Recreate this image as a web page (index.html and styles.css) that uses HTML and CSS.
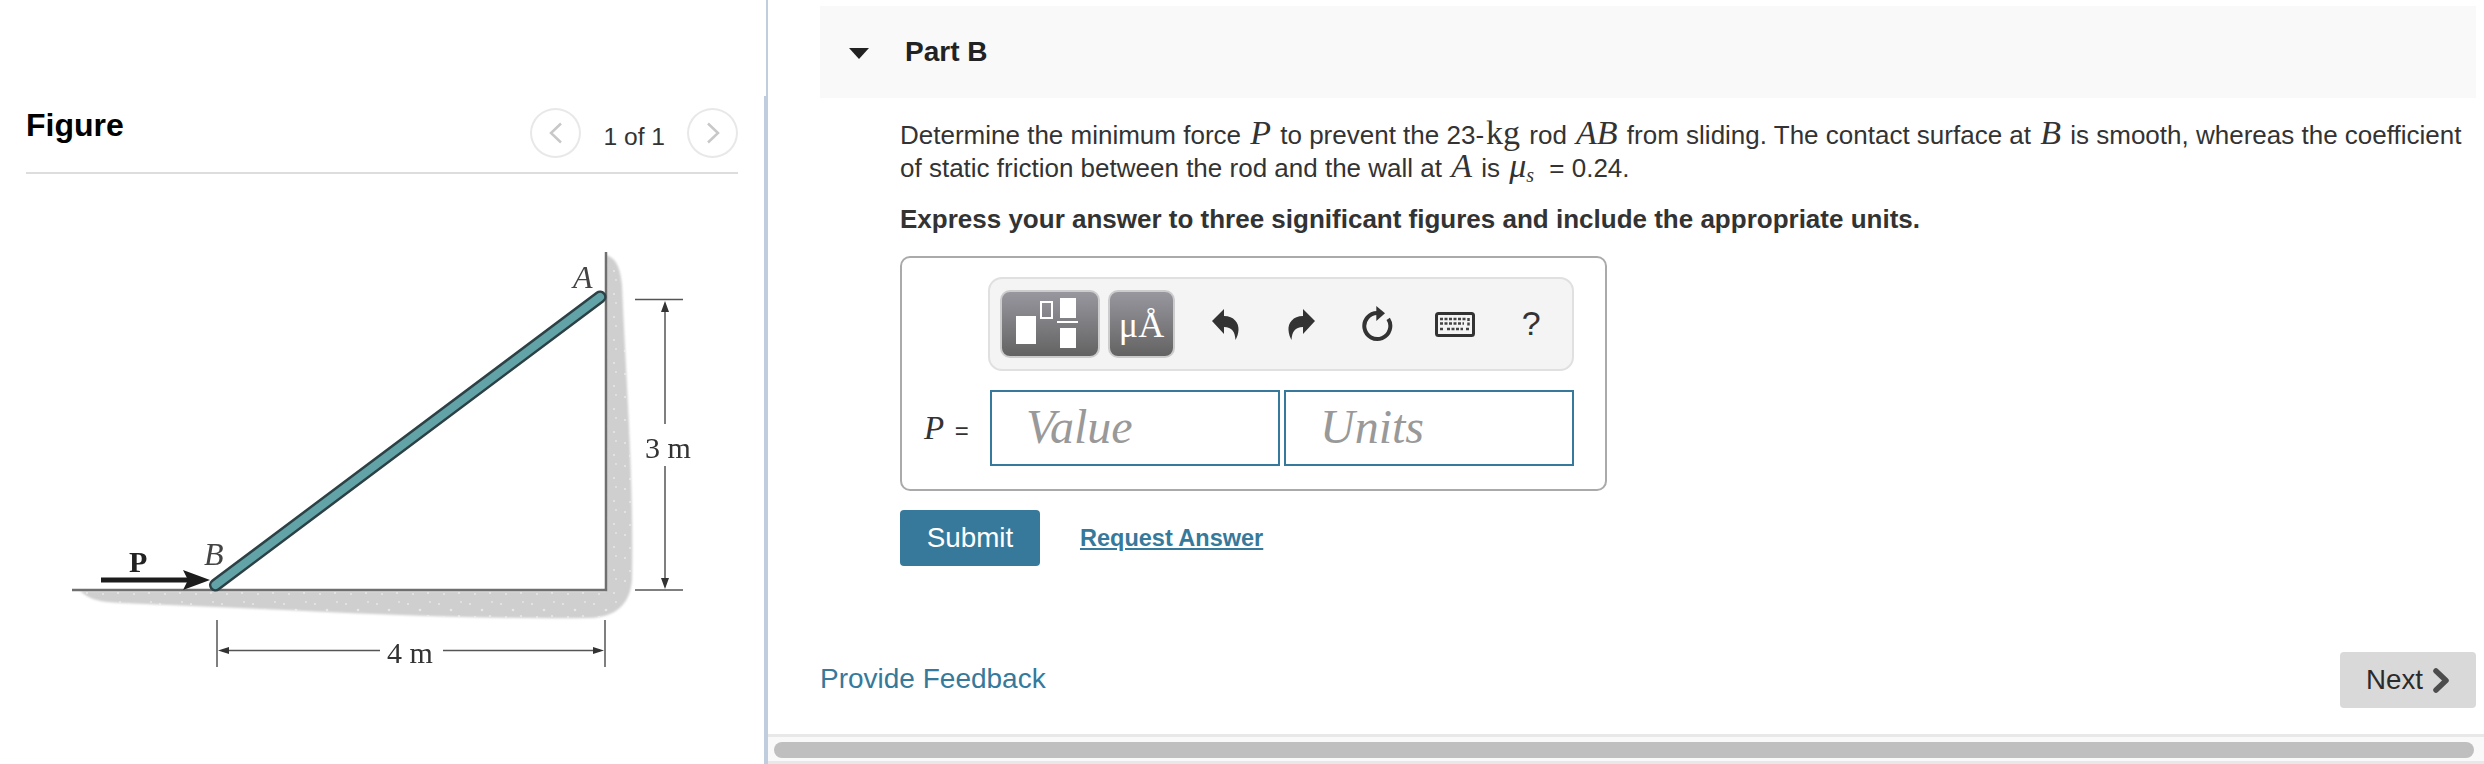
FILE: index.html
```html
<!DOCTYPE html>
<html lang="en">
<head>
<meta charset="utf-8">
<title>Part B</title>
<link rel="stylesheet" href="styles.css">
</head>
<body>
<div class="page">
  <aside class="figure-panel">
    <div class="figure-head">
      <h2 class="figure-title">Figure</h2>
      <div class="pager">
        <span class="pager-btn"><svg width="16" height="22" viewBox="0 0 16 22"><path class="chev" d="M13 1.5 3 11l10 9.5"/></svg></span>
        <span class="pager-text">1 of 1</span>
        <span class="pager-btn"><svg width="16" height="22" viewBox="0 0 16 22"><path class="chev" d="M3 1.5 13 11 3 20.5"/></svg></span>
      </div>
    </div>
    <svg class="diagram" width="712" height="500" viewBox="26 200 712 500">
      <defs>
        <pattern id="speck" width="31" height="23" patternUnits="userSpaceOnUse">
          <circle cx="5" cy="6" r="1.100" fill="#fff"/>
          <circle cx="17" cy="12" r="1.300" fill="#fff"/>
          <circle cx="27" cy="4" r=".9" fill="#fff"/>
          <circle cx="10" cy="19" r="1" fill="#fff"/>
          <circle cx="25" cy="18" r="1.100" fill="#fff"/>
        </pattern>
      </defs>
      <path class="wall" d="M80 591H606V255C615 258 620 265 622 285 626 380 634 480 632 580 630 605 615 617 590 618 450 620 300 610 120 603 100 602 90 600 80 591Z"/>
      <path class="wall-speck" d="M80 591H606V255C615 258 620 265 622 285 626 380 634 480 632 580 630 605 615 617 590 618 450 620 300 610 120 603 100 602 90 600 80 591Z"/>
      <path class="surface" d="M72 590H606V252"/>
      <line class="rod-edge" x1="215.5" y1="585" x2="600" y2="297"/>
      <line class="rod-core" x1="215.5" y1="585" x2="600" y2="297"/>
      <line class="force" x1="101" y1="580" x2="188" y2="580"/>
      <path class="force-head" d="M183 570 210 580 183 590 188 580Z"/>
      <path class="dim" d="M635 299.5H683M635 590H683M665 305V424M665 466V585M217 620V667M605 620V667M222 650.500H380M443 650.500H600"/>
      <path class="dim-head" d="M665 301 661 312H669ZM665 589 661 578H669ZM218 650.500 229 647V654ZM604 650.500 593 647V654Z"/>
      <text class="lbl-i" x="573" y="288">A</text>
      <text class="lbl-i" x="204" y="565">B</text>
      <text class="lbl-b" x="129" y="572">P</text>
      <text class="lbl" x="645" y="458">3 m</text>
      <text class="lbl" x="387" y="663">4 m</text>
    </svg>
  </aside>

  <div class="divider"><div class="divider-top"></div><div class="divider-main"></div></div>

  <main class="main-panel">
    <div class="content">
      <header class="part-head">
        <span class="caret"></span>
        <h2 class="part-title">Part B</h2>
      </header>
      <section class="question">
        <p class="prompt">Determine the minimum force <i class="m">P</i> to prevent the 23-<span class="mr">kg</span> rod <i class="m">AB</i> from sliding. The contact surface at <i class="m">B</i> is smooth, whereas the coefficient<br>of static friction between the rod and the wall at <i class="m">A</i> is <i class="m mu">μ<sub class="sub">s</sub></i> = 0.24.</p>
        <p class="instr">Express your answer to three significant figures and include the appropriate units.</p>

        <div class="answer-box">
          <div class="toolbar">
            <div class="tool-btn tool-wide">
              <svg width="96" height="64" viewBox="0 0 96 64">
                <rect class="w" x="14" y="24" width="20" height="28"/>
                <rect class="wo" x="39" y="10" width="11" height="16"/>
                <rect class="w" x="58" y="6" width="16" height="20"/>
                <rect class="w" x="55" y="29" width="21" height="2"/>
                <rect class="w" x="58" y="36" width="16" height="20"/>
              </svg>
            </div>
            <div class="tool-btn tool-unit">μÅ</div>
            <div class="tools">
              <span class="tool"><svg width="27" height="31" viewBox="0 0 27 31"><path class="ic" d="M0 12 12 0V7C22 7 27 14 26.500 21 26.300 25 25 28 23.500 31 23 23 20 18 12 18V25Z"/></svg></span>
              <span class="tool"><svg width="27" height="31" viewBox="0 0 27 31"><path class="ic" d="M27 12 15 0V7C5 7 0 14 .5 21 .7 25 2 28 3.500 31 4 23 7 18 15 18V25Z"/></svg></span>
              <span class="tool"><svg width="32" height="36" viewBox="0 0 32 36"><path class="ic-line" d="M15.500 7A13 13 0 1 0 26.200 12.900"/><path class="ic" d="M14.300 0 23 7.300 14.300 15Z"/></svg></span>
              <span class="tool"><svg width="40" height="25" viewBox="0 0 40 25"><rect class="kb" x="1.500" y="1.500" width="37" height="22" rx="2"/><path class="kb-keys" d="M5 7H31M5 11.500H29M5 17H9M12 17H28M31 17H35M33.500 6V14"/></svg></span>
              <span class="tool tool-help">?</span>
            </div>
          </div>
          <div class="answer-row">
            <span class="answer-label"><i class="p-var">P</i> =</span>
            <div class="field">Value</div>
            <div class="field">Units</div>
          </div>
        </div>

        <div class="actions">
          <a class="submit">Submit</a>
          <a class="request">Request Answer</a>
        </div>
      </section>
      <footer class="foot">
        <a class="feedback">Provide Feedback</a>
        <a class="next">Next <svg class="next-chev" width="17" height="25" viewBox="0 0 17 25"><path d="M3 3 13 12.500 3 22"/></svg></a>
      </footer>
    </div>
    <div class="scrollbar"><div class="thumb"></div></div>
  </main>
</div>
</body>
</html>
```

FILE: styles.css
```css
* { box-sizing: border-box; }
html, body { margin: 0; padding: 0; background: #fff; }
body { font-family: "Liberation Sans", Arial, sans-serif; color: #333; overflow: hidden; }
.page { display: flex; width: 2484px; height: 764px; overflow: hidden; }

/* left figure panel */
.figure-panel { width: 764px; flex: none; padding: 108px 26px 0; }
.figure-head { display: flex; align-items: center; justify-content: space-between; height: 66px; padding-bottom: 14px; border-bottom: 2px solid #ddd; }
.figure-title { margin: 0 0 16px; font-size: 32px; font-weight: 700; color: #000; line-height: 40px; }
.pager { display: flex; align-items: center; }
.pager-btn { width: 51px; height: 50px; border: 2px solid #e8e8e8; border-radius: 50%; display: flex; align-items: center; justify-content: center; }
.chev { fill: none; stroke: #c8c8c8; stroke-width: 2.5; }
.pager-text { margin: 0 22px; padding-top: 7px; font-size: 24.600px; color: #333; }
.diagram { display: block; margin-top: 26px; filter: blur(.55px); }
.wall { fill: #cfcfcf; filter: blur(1px); }
.wall-speck { fill: url(#speck); opacity: .5; }
.surface { fill: none; stroke: #6f6f6f; stroke-width: 2.500; }
.rod-edge { stroke: #2c4145; stroke-width: 13; stroke-linecap: round; }
.rod-core { stroke: #62a3a8; stroke-width: 8; stroke-linecap: round; }
.force { stroke: #1c1c1c; stroke-width: 5; }
.force-head { fill: #1c1c1c; }
.dim { fill: none; stroke: #555; stroke-width: 1.500; }
.dim-head { fill: #333; }
.lbl, .lbl-i, .lbl-b { font-family: "Liberation Serif", "Times New Roman", serif; font-size: 30px; fill: #333; }
.lbl-i { font-style: italic; fill: #444; font-size: 32px; }
.lbl-b { font-weight: 700; fill: #222; }

/* divider */
.divider { width: 4px; flex: none; display: flex; flex-direction: column; align-items: flex-end; }
.divider-top { width: 2px; height: 96px; background: #bfcddf; }
.divider-main { width: 4px; flex: 1; background: #bfcddf; }

/* main panel */
.main-panel { flex: 1; min-width: 0; display: flex; flex-direction: column; }
.content { flex: 1; padding: 6px 8px 0 52px; }
.part-head { height: 92px; background: #f9f9f9; display: flex; align-items: center; padding-left: 29px; }
.caret { width: 0; height: 0; border-left: 10px solid transparent; border-right: 10px solid transparent; border-top: 11px solid #222; margin-top: 2px; }
.part-title { margin: 0 0 0 36px; font-size: 28px; font-weight: 700; color: #222; line-height: 40px; }

.question { padding-left: 80px; }
.prompt { margin: 21px 0 0; font-size: 26px; line-height: 33px; color: #333; }
.m, .mr { font-family: "Liberation Serif", "Times New Roman", serif; font-size: 34px; line-height: 0; margin: 0 2px; }
.m { font-style: italic; }
.mu { margin-right: 8px; }
.sub { font-size: 20px; line-height: 0; vertical-align: -5px; }
.instr { margin: 18px 0 0; font-size: 26px; font-weight: 700; line-height: 33px; color: #333; }

.answer-box { width: 707px; height: 235px; margin-top: 20px; border: 2px solid #aaa; border-radius: 10px; padding: 19px 31px 0 86px; }
.toolbar { height: 94px; display: flex; align-items: center; padding-left: 10px; background: #f4f4f4; border: 2px solid #e0e0e0; border-radius: 14px; }
.tool-btn { height: 68px; border: 2px solid #ccc; border-radius: 10px; background: linear-gradient(#98979f, #636363); color: #fff; display: flex; align-items: center; justify-content: center; }
.tool-wide { width: 100px; }
.tool-unit { width: 67px; margin-left: 8px; font-family: "Liberation Serif", "Times New Roman", serif; font-size: 36px; padding-top: 2px; }
.w { fill: #fff; }
.wo { fill: none; stroke: #fff; stroke-width: 2; }
.tools { display: flex; margin-left: 12px; }
.tool { width: 76.500px; height: 68px; display: flex; align-items: center; justify-content: center; }
.tool-help { font-size: 34px; color: #333; padding-bottom: 2px; }
.ic { fill: #333; }
.ic-line { fill: none; stroke: #333; stroke-width: 4; }
.kb { fill: none; stroke: #333; stroke-width: 3; }
.kb-keys { fill: none; stroke: #444; stroke-width: 2.500; stroke-dasharray: 3 1.500; }

.answer-row { display: flex; align-items: center; margin-top: 19px; margin-left: -86px; padding-left: 22px; }
.answer-label { width: 66px; flex: none; font-size: 24px; color: #333; }
.p-var { font-family: "Liberation Serif", "Times New Roman", serif; font-size: 33px; margin-right: 4px; }
.field { width: 290px; height: 76px; flex: none; margin-right: 4px; padding-left: 34px; border: 2px solid #37799b; font-family: "Liberation Serif", "Times New Roman", serif; font-style: italic; font-size: 48px; line-height: 70px; color: #999; }

.actions { display: flex; align-items: center; margin-top: 19px; }
.submit { width: 140px; height: 56px; background: #37799b; border-radius: 4px; color: #fff; font-size: 27.800px; display: flex; align-items: center; justify-content: center; }
.request { margin-left: 40px; color: #37799b; font-size: 23.500px; font-weight: 700; text-decoration: underline; }

.foot { display: flex; align-items: center; justify-content: space-between; margin-top: 86px; }
.feedback { color: #37799b; font-size: 28px; margin-bottom: 2px; }
.next { width: 136px; height: 56px; background: #d9d9d9; border-radius: 4px; color: #2b2b2b; font-size: 27.700px; display: flex; align-items: center; justify-content: center; gap: 10px; }
.next-chev path { fill: none; stroke: #4d4d4d; stroke-width: 5.500; stroke-linecap: round; stroke-linejoin: round; }

.scrollbar { height: 30px; flex: none; background: #f9f9f9; border-top: 3px solid #e8e8e8; border-bottom: 3px solid #e8e8e8; padding: 5px 10px 0 6px; }
.thumb { height: 16px; background: #bfbfbf; border-radius: 8px; }
```
